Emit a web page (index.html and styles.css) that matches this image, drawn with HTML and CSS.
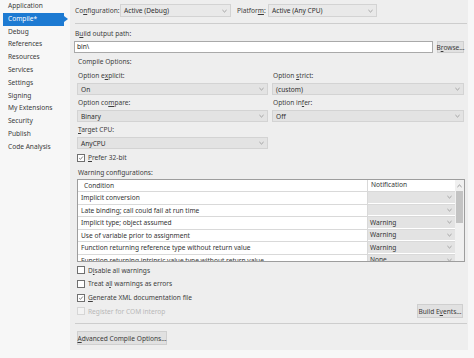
FILE: index.html
```html
<!DOCTYPE html>
<html>
<head>
<meta charset="utf-8">
<link rel="stylesheet" href="styles.css">
</head>
<body>
<div class="page">
  <nav class="sidebar">
    <div class="nav-item">Application</div>
    <div class="nav-item active">Compile*</div>
    <div class="nav-item">Debug</div>
    <div class="nav-item">References</div>
    <div class="nav-item">Resources</div>
    <div class="nav-item">Services</div>
    <div class="nav-item">Settings</div>
    <div class="nav-item">Signing</div>
    <div class="nav-item">My Extensions</div>
    <div class="nav-item">Security</div>
    <div class="nav-item">Publish</div>
    <div class="nav-item">Code Analysis</div>
  </nav>
  <main class="main">
    <div class="top-row">
      <span class="lbl cfg-lbl">Co<u>n</u>figuration:</span>
      <div class="select cfg-sel"><span>Active (Debug)</span><svg class="chev" viewBox="0 0 6 4"><path d="M0.5 0.8 L3 3.2 L5.5 0.8" fill="none" stroke="#8a8a8a" stroke-width="0.9"/></svg></div>
      <span class="lbl plat-lbl">Platfor<u>m</u>:</span>
      <div class="select plat-sel"><span>Active (Any CPU)</span><svg class="chev" viewBox="0 0 6 4"><path d="M0.5 0.8 L3 3.2 L5.5 0.8" fill="none" stroke="#8a8a8a" stroke-width="0.9"/></svg></div>
    </div>
    <div class="rule top-rule"></div>
    <div class="lbl path-lbl">B<u>u</u>ild output path:</div>
    <div class="path-row">
      <div class="input">bin\</div>
      <div class="btn browse">B<u>r</u>owse...</div>
    </div>
    <div class="lbl opts-lbl">Compile Options:</div>
    <div class="opts">
      <div class="grp">
        <div class="lbl glbl">Option e<u>x</u>plicit:</div>
        <div class="select"><span>On</span><svg class="chev" viewBox="0 0 6 4"><path d="M0.5 0.8 L3 3.2 L5.5 0.8" fill="none" stroke="#8a8a8a" stroke-width="0.9"/></svg></div>
      </div>
      <div class="grp">
        <div class="lbl glbl">Option <u>s</u>trict:</div>
        <div class="select"><span>(custom)</span><svg class="chev" viewBox="0 0 6 4"><path d="M0.5 0.8 L3 3.2 L5.5 0.8" fill="none" stroke="#8a8a8a" stroke-width="0.9"/></svg></div>
      </div>
      <div class="grp">
        <div class="lbl glbl">Option co<u>m</u>pare:</div>
        <div class="select"><span>Binary</span><svg class="chev" viewBox="0 0 6 4"><path d="M0.5 0.8 L3 3.2 L5.5 0.8" fill="none" stroke="#8a8a8a" stroke-width="0.9"/></svg></div>
      </div>
      <div class="grp">
        <div class="lbl glbl">Option in<u>f</u>er:</div>
        <div class="select"><span>Off</span><svg class="chev" viewBox="0 0 6 4"><path d="M0.5 0.8 L3 3.2 L5.5 0.8" fill="none" stroke="#8a8a8a" stroke-width="0.9"/></svg></div>
      </div>
      <div class="grp">
        <div class="lbl glbl"><u>T</u>arget CPU:</div>
        <div class="select"><span>AnyCPU</span><svg class="chev" viewBox="0 0 6 4"><path d="M0.5 0.8 L3 3.2 L5.5 0.8" fill="none" stroke="#8a8a8a" stroke-width="0.9"/></svg></div>
      </div>
    </div>
    <div class="chk-row prefer">
      <span class="box checked"><svg viewBox="0 0 8 8"><path d="M1.6 4.2 L3.3 5.8 L6.5 2" fill="none" stroke="#444" stroke-width="0.9"/></svg></span>
      <span class="lbl"><u>P</u>refer 32-bit</span>
    </div>
    <div class="lbl warn-lbl">Warning configurations:</div>
    <div class="table">
      <div class="tbody">
        <div class="tr th"><div class="c1">Condition</div><div class="c2 hdr">Notification</div></div>
        <div class="tr"><div class="c1">Implicit conversion</div><div class="c2"><span></span><svg class="chev" viewBox="0 0 6 4"><path d="M0.5 0.8 L3 3.2 L5.5 0.8" fill="none" stroke="#8a8a8a" stroke-width="0.9"/></svg></div></div>
        <div class="tr"><div class="c1">Late binding; call could fail at run time</div><div class="c2"><span></span><svg class="chev" viewBox="0 0 6 4"><path d="M0.5 0.8 L3 3.2 L5.5 0.8" fill="none" stroke="#8a8a8a" stroke-width="0.9"/></svg></div></div>
        <div class="tr"><div class="c1">Implicit type; object assumed</div><div class="c2"><span>Warning</span><svg class="chev" viewBox="0 0 6 4"><path d="M0.5 0.8 L3 3.2 L5.5 0.8" fill="none" stroke="#8a8a8a" stroke-width="0.9"/></svg></div></div>
        <div class="tr"><div class="c1">Use of variable prior to assignment</div><div class="c2"><span>Warning</span><svg class="chev" viewBox="0 0 6 4"><path d="M0.5 0.8 L3 3.2 L5.5 0.8" fill="none" stroke="#8a8a8a" stroke-width="0.9"/></svg></div></div>
        <div class="tr"><div class="c1">Function returning reference type without return value</div><div class="c2"><span>Warning</span><svg class="chev" viewBox="0 0 6 4"><path d="M0.5 0.8 L3 3.2 L5.5 0.8" fill="none" stroke="#8a8a8a" stroke-width="0.9"/></svg></div></div>
        <div class="tr"><div class="c1">Function returning intrinsic value type without return value</div><div class="c2"><span>None</span><svg class="chev" viewBox="0 0 6 4"><path d="M0.5 0.8 L3 3.2 L5.5 0.8" fill="none" stroke="#8a8a8a" stroke-width="0.9"/></svg></div></div>
      </div>
      <div class="scroll">
        <svg class="up" viewBox="0 0 6 4"><path d="M0.5 3.2 L3 0.8 L5.5 3.2" fill="none" stroke="#777" stroke-width="0.9"/></svg>
        <div class="thumb"></div>
      </div>
    </div>
    <div class="chk-row first-chk">
      <span class="box"></span><span class="lbl">D<u>i</u>sable all warnings</span>
    </div>
    <div class="chk-row">
      <span class="box"></span><span class="lbl">Treat a<u>l</u>l warnings as errors</span>
    </div>
    <div class="chk-row">
      <span class="box checked"><svg viewBox="0 0 8 8"><path d="M1.6 4.2 L3.3 5.8 L6.5 2" fill="none" stroke="#444" stroke-width="0.9"/></svg></span>
      <span class="lbl"><u>G</u>enerate XML documentation file</span>
    </div>
    <div class="chk-row last-row">
      <span class="box disabled"></span><span class="lbl dis">Register for COM interop</span>
      <div class="btn events">Build E<u>v</u>ents...</div>
    </div>
    <div class="rule bottom-rule"></div>
    <div class="btn advanced"><u>A</u>dvanced Compile Options...</div>
  </main>
</div>
</body>
</html>
```

FILE: styles.css
```css
* { box-sizing: border-box; }
html, body { margin: 0; padding: 0; }
body {
  width: 474px; height: 358px; overflow: hidden;
  background: #f7f7f7;
  font-family: "Noto Sans", "Open Sans", sans-serif;
  font-size: 6.6px;
  color: #333;
}
u { text-decoration: underline; text-underline-offset: 1px; text-decoration-thickness: 0.5px; }
.page { display: flex; height: 358px; }

.sidebar { width: 70px; flex: none; padding-top: 0; }
.nav-item {
  height: 12.8px; line-height: 12.8px; padding-left: 8px; color: #3a3a3a; white-space: nowrap;
}
.nav-item.active {
  position: relative; background: #1d7ad2; color: #fff;
  margin-left: 3px; width: 61px; padding-left: 5px;
}
.nav-item.active::after {
  content: ""; position: absolute; right: -4px; top: 3.4px;
  border-left: 4px solid #1d7ad2; border-top: 3px solid transparent; border-bottom: 3px solid transparent;
}

.main {
  width: 398px; height: 350px; flex: none;
  background: #eeeeee;
  padding: 4px 0 0 4px;
  display: flex; flex-direction: column;
}
.lbl { color: #3d3d3d; white-space: nowrap; }

.top-row { display: flex; align-items: center; height: 13px; }
.cfg-lbl { width: 46px; padding-left: 1px; }
.select {
  display: flex; align-items: center; justify-content: space-between;
  height: 12px; background: #e3e3e3; border: 1px solid #d3d3d3;
  padding: 0 3px 0 3px; color: #2e2e2e;
}
.select .chev, .c2 .chev { width: 5px; height: 4px; flex: none; }
.cfg-sel { width: 111px; height: 13px; background: #e9e9e9; }
.plat-lbl { width: 31px; margin-left: 6px; }
.plat-sel { width: 109px; height: 13px; background: #e9e9e9; }

.rule { height: 1px; background: #cdcdcd; width: 392px; margin-left: 1px; flex: none; }
.top-rule { margin-top: 6px; }
.path-lbl { height: 10px; line-height: 10px; margin-top: 5px; padding-left: 1px; }
.path-row { display: flex; margin-top: 2px; height: 12px; gap: 4px; }
.input {
  width: 359px; height: 12px; background: #fff; border: 1px solid #a9a9a9;
  line-height: 10px; padding-left: 2px; color: #222;
}
.btn {
  background: #e1e1e1; border: 1px solid #cfcfcf; color: #3a3a3a;
  display: flex; align-items: center; justify-content: center; white-space: nowrap;
}
.browse { width: 27px; height: 12px; }

.opts-lbl { height: 10px; line-height: 10px; margin-top: 4px; padding-left: 4px; }
.opts {
  display: grid; grid-template-columns: 191px 192px; column-gap: 4px; row-gap: 1px;
  margin-left: 3px; margin-top: 2px;
}
.glbl { height: 14px; line-height: 14px; padding-left: 1px; }
.grp .select { width: 100%; }

.chk-row { display: flex; align-items: center; height: 13.6px; flex: none; margin-left: 3px; gap: 3px; }
.prefer { margin-top: 2px; }
.first-chk { margin-top: 2px; }
.box {
  width: 8px; height: 8px; flex: none; background: #fff; border: 1px solid #6f6f6f;
  display: flex;
}
.box svg { width: 6px; height: 6px; }
.box.disabled { border-color: #d6d6d6; background: #f3f3f3; }
.lbl.dis { color: #b8b8b8; }

.warn-lbl { height: 12px; line-height: 12px; margin-top: 2px; padding-left: 4px; }
.table {
  display: flex; margin-left: 3px; width: 388px; height: 83px; flex: none;
  border: 1px solid #9d9d9d; background: #fff; overflow: hidden;
}
.tbody { flex: 1; display: flex; flex-direction: column; }
.tr { display: flex; height: 12.5px; flex: none; border-bottom: 1px solid #d9d9d9; }
.c1 { flex: 1; padding-left: 3px; line-height: 11.5px; white-space: nowrap; overflow: hidden; color: #333; border-right: 1px solid #d9d9d9; }
.c2 {
  width: 87px; flex: none; background: #e3e3e3; display: flex; align-items: center;
  justify-content: space-between; padding: 0 3px 0 2px; color: #333; border-bottom: 1px solid #fff;
}
.th .c1 { padding-left: 6px; }
.c2.hdr { background: #fff; padding-left: 3px; }
.scroll {
  width: 9px; flex: none; background: #f0f0f0; position: relative;
}
.scroll .up { position: absolute; left: 2px; top: 4px; width: 5px; height: 4px; }
.thumb { position: absolute; left: 1px; right: 1px; top: 11px; height: 32px; background: #c3c3c3; }

.last-row { height: 14px; }
.events { margin-left: auto; width: 46px; height: 14px; margin-right: 5px; }
.bottom-rule { margin-top: 5px; }
.advanced { width: 90px; height: 14px; margin-left: 3px; margin-top: 7px; flex: none; }
```
